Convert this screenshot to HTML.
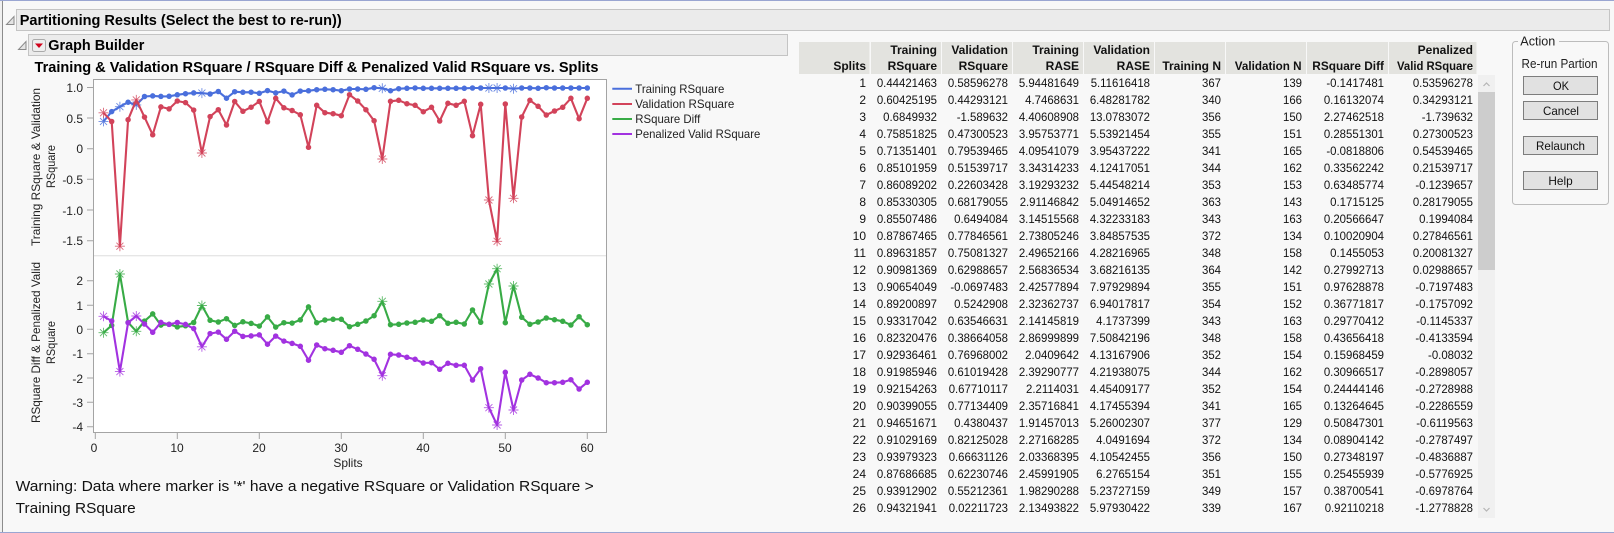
<!DOCTYPE html>
<html><head><meta charset="utf-8"><title>Partitioning Results</title>
<style>
html,body{margin:0;padding:0;background:#f7f7f7}
svg{display:block;font-family:"Liberation Sans",sans-serif}
.b{font-weight:bold;fill:#000}
.h{font-weight:bold;font-size:12px;fill:#111;text-anchor:end}
.c{font-size:12px;fill:#111;text-anchor:end}
.t{font-size:12px;fill:#222;text-anchor:end}
.m{font-size:12px;fill:#222;text-anchor:middle}
.l{font-size:12px;fill:#222}
.bt{font-size:12px;fill:#111;text-anchor:middle}
.ln{fill:none;stroke-width:2.1;stroke-linejoin:round}
.dt{fill:none;stroke-width:5.5;stroke-linecap:round}
.st{fill:none;stroke-width:.9;opacity:.8}
</style></head><body>
<svg width="1614" height="533" viewBox="0 0 1614 533" xmlns="http://www.w3.org/2000/svg">
<rect width="1614" height="533" fill="#f8f8f8"/>
<rect x="0" y="0" width="1614" height="1" fill="#9aa6d2"/>
<rect x="0" y="532" width="1614" height="1" fill="#9aa6d2"/>
<rect x="2" y="1" width="1" height="531" fill="#8c8c8c"/>
<rect x="0" y="1" width="2" height="531" fill="#f0f0f0"/>

<!-- outline headers -->
<rect x="16.5" y="9.5" width="1593" height="21" fill="#ebebeb" stroke="#c4c4c4"/>
<path d="M14 16.5V24.5H6.5Z" fill="#e4e4e4" stroke="#8a8a8a"/>
<text x="19.7" y="25" class="b" font-size="15" textLength="322" lengthAdjust="spacingAndGlyphs">Partitioning Results (Select the best to re-run))</text>
<rect x="28.5" y="34.5" width="759" height="21" fill="#ebebeb" stroke="#c4c4c4"/>
<path d="M26 41.5V49.5H18.5Z" fill="#e4e4e4" stroke="#8a8a8a"/>
<rect x="32.5" y="39.5" width="13" height="12" rx="2" fill="#eeeeee" stroke="#aaaaaa"/>
<path d="M35 43.5H43L39 48Z" fill="#d0021b"/>
<text x="48.3" y="50" class="b" font-size="15" textLength="96" lengthAdjust="spacingAndGlyphs">Graph Builder</text>
<text x="34.5" y="72" class="b" font-size="15" textLength="564" lengthAdjust="spacingAndGlyphs">Training &amp; Validation RSquare / RSquare Diff &amp; Penalized Valid RSquare vs. Splits</text>

<!-- plot frame -->
<rect x="93.5" y="79.5" width="513" height="353" fill="#ffffff"/>
<path d="M94 255.7H606" stroke="#dddddd" stroke-width="1"/>
<rect x="93.5" y="79.5" width="513" height="353" fill="none" stroke="#a4a4a4"/>
<path d="M87 87.5h6M87 118h6M87 148.7h6M87 179.3h6M87 210h6M87 240.7h6M87 280.7h6M87 305.3h6M87 329.3h6M87 353.7h6M87 378h6M87 402.3h6M87 426.7h6M95.3 433v6M177.3 433v6M259.3 433v6M341.3 433v6M423.3 433v6M505.3 433v6M587.3 433v6" stroke="#a4a4a4" stroke-width="1" fill="none"/>
<g class="t">
<text class="t" x="83" y="92">1.0</text><text class="t" x="83" y="123">0.5</text><text class="t" x="83" y="153">0</text><text class="t" x="83" y="184">-0.5</text><text class="t" x="83" y="215">-1.0</text><text class="t" x="83" y="245">-1.5</text>
<text class="t" x="83" y="285">2</text><text class="t" x="83" y="310">1</text><text class="t" x="83" y="334">0</text><text class="t" x="83" y="358">-1</text><text class="t" x="83" y="383">-2</text><text class="t" x="83" y="407">-3</text><text class="t" x="83" y="431">-4</text>
</g>
<text class="m" x="94" y="452">0</text><text class="m" x="177" y="452">10</text><text class="m" x="259" y="452">20</text><text class="m" x="341" y="452">30</text><text class="m" x="423" y="452">40</text><text class="m" x="505" y="452">50</text><text class="m" x="587" y="452">60</text>
<text class="m" x="348" y="467" font-size="12">Splits</text>
<text class="l" transform="translate(40 246) rotate(-90)" textLength="158" lengthAdjust="spacingAndGlyphs">Training RSquare &amp; Validation</text>
<text class="l" transform="translate(55 188) rotate(-90)" textLength="43" lengthAdjust="spacingAndGlyphs">RSquare</text>
<text class="l" transform="translate(40 423) rotate(-90)" textLength="161" lengthAdjust="spacingAndGlyphs">RSquare Diff &amp; Penalized Valid</text>
<text class="l" transform="translate(55 364) rotate(-90)" textLength="43" lengthAdjust="spacingAndGlyphs">RSquare</text>

<!-- series: training -->
<g stroke="#4a6fdc">
<polyline class="ln" points="103.5,121.4 111.7,111.6 119.9,106.7 128.1,102.2 136.3,104.9 144.5,96.5 152.7,95.9 160.9,96.4 169.1,96.3 177.3,94.8 185.5,93.7 193.7,92.9 201.9,93.1 210.1,94 218.3,91.5 226.5,98.2 234.7,91.7 242.9,92.3 251.1,92.2 259.3,93.3 267.5,90.6 275.7,92.9 283.9,91.1 292.1,94.9 300.3,91.1 308.5,90.8 316.7,89.7 324.9,89.3 333.1,89.7 341.3,90.7 349.5,89 357.7,89 365.9,89.3 374.1,87.7 382.3,88.3 390.5,90.7 398.7,88.7 406.9,88.3 415.1,88 423.3,88.3 431.5,88.3 439.7,88.3 447.9,88.3 456.1,88.3 464.3,88.3 472.5,88 480.7,88 488.9,88 497.1,88 505.3,88 513.5,88.7 521.7,88 529.9,88 538.1,88.3 546.3,87.7 554.5,88 562.7,88 570.9,88 579.1,88 587.3,88"/>
<path class="dt" d="M111.7 111.6h0M128.1 102.2h0M144.5 96.5h0M152.7 95.9h0M160.9 96.4h0M169.1 96.3h0M177.3 94.8h0M185.5 93.7h0M193.7 92.9h0M210.1 94h0M218.3 91.5h0M226.5 98.2h0M234.7 91.7h0M242.9 92.3h0M251.1 92.2h0M259.3 93.3h0M267.5 90.6h0M275.7 92.9h0M283.9 91.1h0M292.1 94.9h0M300.3 91.1h0M308.5 90.8h0M316.7 89.7h0M324.9 89.3h0M333.1 89.7h0M341.3 90.7h0M349.5 89h0M357.7 89h0M365.9 89.3h0M374.1 87.7h0M390.5 90.7h0M398.7 88.7h0M406.9 88.3h0M415.1 88h0M423.3 88.3h0M431.5 88.3h0M439.7 88.3h0M447.9 88.3h0M456.1 88.3h0M464.3 88.3h0M472.5 88h0M480.7 88h0M505.3 88h0M521.7 88h0M529.9 88h0M538.1 88.3h0M546.3 87.7h0M554.5 88h0M562.7 88h0M570.9 88h0M579.1 88h0M587.3 88h0"/>
<path class="st" d="M103.5 121.4m0-5v10m-5-5h10m-8.5-3.5l7 7m0-7l-7 7M119.9 106.7m0-5v10m-5-5h10m-8.5-3.5l7 7m0-7l-7 7M136.3 104.9m0-5v10m-5-5h10m-8.5-3.5l7 7m0-7l-7 7M201.9 93.1m0-5v10m-5-5h10m-8.5-3.5l7 7m0-7l-7 7M382.3 88.3m0-5v10m-5-5h10m-8.5-3.5l7 7m0-7l-7 7M488.9 88m0-5v10m-5-5h10m-8.5-3.5l7 7m0-7l-7 7M497.1 88m0-5v10m-5-5h10m-8.5-3.5l7 7m0-7l-7 7M513.5 88.7m0-5v10m-5-5h10m-8.5-3.5l7 7m0-7l-7 7"/>
</g>
<!-- series: validation -->
<g stroke="#d2435a">
<polyline class="ln" points="103.5,112.8 111.7,121.5 119.9,246.2 128.1,119.7 136.3,99.9 144.5,117.1 152.7,134.8 160.9,106.9 169.1,108.9 177.3,101 185.5,102.6 193.7,110.1 201.9,153 210.1,116.6 218.3,109.7 226.5,125 234.7,101.5 242.9,111.3 251.1,107.2 259.3,101.4 267.5,121.8 275.7,98.3 283.9,107.8 292.1,110.5 300.3,114.8 308.5,147.3 316.7,105.3 324.9,112.7 333.1,113.7 341.3,115.7 349.5,94.7 357.7,101 365.9,109.7 374.1,120.7 382.3,159 390.5,101.3 398.7,100.3 406.9,103.7 415.1,105.3 423.3,111.7 431.5,107.3 439.7,121 447.9,103.3 456.1,105.3 464.3,101.3 472.5,135.7 480.7,104.3 488.9,200 497.1,241.3 505.3,104 513.5,198.3 521.7,117 529.9,100.3 538.1,106.3 546.3,115 554.5,111 562.7,107.3 570.9,98.3 579.1,118.7 587.3,98.3"/>
<path class="dt" d="M111.7 121.5h0M128.1 119.7h0M144.5 117.1h0M152.7 134.8h0M160.9 106.9h0M169.1 108.9h0M177.3 101h0M185.5 102.6h0M193.7 110.1h0M210.1 116.6h0M218.3 109.7h0M226.5 125h0M234.7 101.5h0M242.9 111.3h0M251.1 107.2h0M259.3 101.4h0M267.5 121.8h0M275.7 98.3h0M283.9 107.8h0M292.1 110.5h0M300.3 114.8h0M308.5 147.3h0M316.7 105.3h0M324.9 112.7h0M333.1 113.7h0M341.3 115.7h0M349.5 94.7h0M357.7 101h0M365.9 109.7h0M374.1 120.7h0M390.5 101.3h0M398.7 100.3h0M406.9 103.7h0M415.1 105.3h0M423.3 111.7h0M431.5 107.3h0M439.7 121h0M447.9 103.3h0M456.1 105.3h0M464.3 101.3h0M472.5 135.7h0M480.7 104.3h0M505.3 104h0M521.7 117h0M529.9 100.3h0M538.1 106.3h0M546.3 115h0M554.5 111h0M562.7 107.3h0M570.9 98.3h0M579.1 118.7h0M587.3 98.3h0"/>
<path class="st" d="M103.5 112.8m0-5v10m-5-5h10m-8.5-3.5l7 7m0-7l-7 7M119.9 246.2m0-5v10m-5-5h10m-8.5-3.5l7 7m0-7l-7 7M136.3 99.9m0-5v10m-5-5h10m-8.5-3.5l7 7m0-7l-7 7M201.9 153m0-5v10m-5-5h10m-8.5-3.5l7 7m0-7l-7 7M382.3 159m0-5v10m-5-5h10m-8.5-3.5l7 7m0-7l-7 7M488.9 200m0-5v10m-5-5h10m-8.5-3.5l7 7m0-7l-7 7M497.1 241.3m0-5v10m-5-5h10m-8.5-3.5l7 7m0-7l-7 7M513.5 198.3m0-5v10m-5-5h10m-8.5-3.5l7 7m0-7l-7 7"/>
</g>
<!-- series: diff -->
<g stroke="#38ab46">
<polyline class="ln" points="103.5,332.7 111.7,325.4 119.9,274 128.1,322.4 136.3,331.3 144.5,321.1 152.7,313.9 160.9,325.1 169.1,324.3 177.3,326.9 185.5,325.8 193.7,322.5 201.9,305.5 210.1,320.3 218.3,322 226.5,318.7 234.7,325.4 242.9,321.8 251.1,323.4 259.3,326.1 267.5,316.9 275.7,327.1 283.9,322.7 292.1,323.1 300.3,319.9 308.5,306.9 316.7,322.7 324.9,320 333.1,319.3 341.3,319.3 349.5,326.7 357.7,324.3 365.9,321 374.1,315.7 382.3,301.3 390.5,324.7 398.7,324.3 406.9,323 415.1,322.3 423.3,320 431.5,321.3 439.7,315.7 447.9,323.3 456.1,322.3 464.3,324 472.5,310 480.7,322.3 488.9,284 497.1,268.7 505.3,322.7 513.5,286 521.7,317.3 529.9,324.3 538.1,322 546.3,318 554.5,319.7 562.7,321.3 570.9,325 579.1,316.7 587.3,324.7"/>
<path class="dt" d="M111.7 325.4h0M128.1 322.4h0M144.5 321.1h0M152.7 313.9h0M160.9 325.1h0M169.1 324.3h0M177.3 326.9h0M185.5 325.8h0M193.7 322.5h0M210.1 320.3h0M218.3 322h0M226.5 318.7h0M234.7 325.4h0M242.9 321.8h0M251.1 323.4h0M259.3 326.1h0M267.5 316.9h0M275.7 327.1h0M283.9 322.7h0M292.1 323.1h0M300.3 319.9h0M308.5 306.9h0M316.7 322.7h0M324.9 320h0M333.1 319.3h0M341.3 319.3h0M349.5 326.7h0M357.7 324.3h0M365.9 321h0M374.1 315.7h0M390.5 324.7h0M398.7 324.3h0M406.9 323h0M415.1 322.3h0M423.3 320h0M431.5 321.3h0M439.7 315.7h0M447.9 323.3h0M456.1 322.3h0M464.3 324h0M472.5 310h0M480.7 322.3h0M505.3 322.7h0M521.7 317.3h0M529.9 324.3h0M538.1 322h0M546.3 318h0M554.5 319.7h0M562.7 321.3h0M570.9 325h0M579.1 316.7h0M587.3 324.7h0"/>
<path class="st" d="M103.5 332.7m0-5v10m-5-5h10m-8.5-3.5l7 7m0-7l-7 7M119.9 274m0-5v10m-5-5h10m-8.5-3.5l7 7m0-7l-7 7M136.3 331.3m0-5v10m-5-5h10m-8.5-3.5l7 7m0-7l-7 7M201.9 305.5m0-5v10m-5-5h10m-8.5-3.5l7 7m0-7l-7 7M382.3 301.3m0-5v10m-5-5h10m-8.5-3.5l7 7m0-7l-7 7M488.9 284m0-5v10m-5-5h10m-8.5-3.5l7 7m0-7l-7 7M497.1 268.7m0-5v10m-5-5h10m-8.5-3.5l7 7m0-7l-7 7M513.5 286m0-5v10m-5-5h10m-8.5-3.5l7 7m0-7l-7 7"/>
</g>
<!-- series: penalized -->
<g stroke="#a232e0">
<polyline class="ln" points="103.5,316.3 111.7,321 119.9,371.6 128.1,322.7 136.3,316 144.5,324 152.7,332.3 160.9,322.4 169.1,324.4 177.3,322.5 185.5,324.4 193.7,328.6 201.9,346.8 210.1,333.6 218.3,332.1 226.5,339.3 234.7,331.2 242.9,336.4 251.1,335.9 259.3,334.9 267.5,344.2 275.7,336.1 283.9,341.1 292.1,343.4 300.3,346.3 308.5,360.2 316.7,345 324.9,348.7 333.1,350.3 341.3,352.3 349.5,345.7 357.7,349.3 365.9,354 374.1,359.3 382.3,375.7 390.5,354.3 398.7,355 406.9,357.3 415.1,359.3 423.3,363 431.5,362.7 439.7,369.3 447.9,363.3 456.1,365.3 464.3,365.3 472.5,380 480.7,368.7 488.9,407.7 497.1,425 505.3,372.3 513.5,410 521.7,380 529.9,374.3 538.1,378 546.3,382.7 554.5,382.7 562.7,382.3 570.9,379.7 579.1,389 587.3,382.3"/>
<path class="dt" d="M111.7 321h0M128.1 322.7h0M144.5 324h0M152.7 332.3h0M160.9 322.4h0M169.1 324.4h0M177.3 322.5h0M185.5 324.4h0M193.7 328.6h0M210.1 333.6h0M218.3 332.1h0M226.5 339.3h0M234.7 331.2h0M242.9 336.4h0M251.1 335.9h0M259.3 334.9h0M267.5 344.2h0M275.7 336.1h0M283.9 341.1h0M292.1 343.4h0M300.3 346.3h0M308.5 360.2h0M316.7 345h0M324.9 348.7h0M333.1 350.3h0M341.3 352.3h0M349.5 345.7h0M357.7 349.3h0M365.9 354h0M374.1 359.3h0M390.5 354.3h0M398.7 355h0M406.9 357.3h0M415.1 359.3h0M423.3 363h0M431.5 362.7h0M439.7 369.3h0M447.9 363.3h0M456.1 365.3h0M464.3 365.3h0M472.5 380h0M480.7 368.7h0M505.3 372.3h0M521.7 380h0M529.9 374.3h0M538.1 378h0M546.3 382.7h0M554.5 382.7h0M562.7 382.3h0M570.9 379.7h0M579.1 389h0M587.3 382.3h0"/>
<path class="st" d="M103.5 316.3m0-5v10m-5-5h10m-8.5-3.5l7 7m0-7l-7 7M119.9 371.6m0-5v10m-5-5h10m-8.5-3.5l7 7m0-7l-7 7M136.3 316m0-5v10m-5-5h10m-8.5-3.5l7 7m0-7l-7 7M201.9 346.8m0-5v10m-5-5h10m-8.5-3.5l7 7m0-7l-7 7M382.3 375.7m0-5v10m-5-5h10m-8.5-3.5l7 7m0-7l-7 7M488.9 407.7m0-5v10m-5-5h10m-8.5-3.5l7 7m0-7l-7 7M497.1 425m0-5v10m-5-5h10m-8.5-3.5l7 7m0-7l-7 7M513.5 410m0-5v10m-5-5h10m-8.5-3.5l7 7m0-7l-7 7"/>
</g>

<!-- legend -->
<path d="M612.3 88.7H632" stroke="#4a6fdc" stroke-width="2"/>
<path d="M612.3 104H632" stroke="#d2435a" stroke-width="2"/>
<path d="M612.3 119H632" stroke="#38ab46" stroke-width="2"/>
<path d="M612.3 134H632" stroke="#a232e0" stroke-width="2"/>
<text class="l" x="635.3" y="93" textLength="89" lengthAdjust="spacingAndGlyphs">Training RSquare</text>
<text class="l" x="635.3" y="108" textLength="99" lengthAdjust="spacingAndGlyphs">Validation RSquare</text>
<text class="l" x="635.3" y="123" textLength="65" lengthAdjust="spacingAndGlyphs">RSquare Diff</text>
<text class="l" x="635.3" y="138" textLength="125" lengthAdjust="spacingAndGlyphs">Penalized Valid RSquare</text>

<!-- warning -->
<text x="15.7" y="491" font-size="15" fill="#111" textLength="578" lengthAdjust="spacingAndGlyphs">Warning: Data where marker is '*' have a negative RSquare or Validation RSquare &gt;</text>
<text x="15.7" y="513" font-size="15" fill="#111" textLength="120" lengthAdjust="spacingAndGlyphs">Training RSquare</text>

<!-- table header -->
<g fill="#e3e3df">
<rect x="799" y="42" width="70.5" height="32"/><rect x="871" y="42" width="70" height="32"/><rect x="942" y="42" width="70" height="32"/><rect x="1013" y="42" width="70" height="32"/><rect x="1084" y="42" width="70" height="32"/><rect x="1155" y="42" width="70" height="32"/><rect x="1226" y="42" width="80" height="32"/><rect x="1307" y="42" width="81" height="32"/><rect x="1389" y="42" width="87.5" height="32"/>
</g>
<text class="h" x="866" y="70">Splits</text>
<text class="h" x="937" y="54">Training</text><text class="h" x="937" y="70">RSquare</text>
<text class="h" x="1008" y="54">Validation</text><text class="h" x="1008" y="70">RSquare</text>
<text class="h" x="1079" y="54">Training</text><text class="h" x="1079" y="70">RASE</text>
<text class="h" x="1150" y="54">Validation</text><text class="h" x="1150" y="70">RASE</text>
<text class="h" x="1221" y="70">Training N</text>
<text class="h" x="1301.5" y="70" textLength="66.7" lengthAdjust="spacingAndGlyphs">Validation N</text>
<text class="h" x="1384" y="70" textLength="71.7" lengthAdjust="spacingAndGlyphs">RSquare Diff</text>
<text class="h" x="1473" y="54">Penalized</text><text class="h" x="1473" y="70" textLength="76" lengthAdjust="spacingAndGlyphs">Valid RSquare</text>

<!-- table body -->
<g transform="translate(866 -1)"><text class="c"><tspan x="0" y="88">1</tspan><tspan x="0" y="105">2</tspan><tspan x="0" y="122">3</tspan><tspan x="0" y="139">4</tspan><tspan x="0" y="156">5</tspan><tspan x="0" y="173">6</tspan><tspan x="0" y="190">7</tspan><tspan x="0" y="207">8</tspan><tspan x="0" y="224">9</tspan><tspan x="0" y="241">10</tspan><tspan x="0" y="258">11</tspan><tspan x="0" y="275">12</tspan><tspan x="0" y="292">13</tspan><tspan x="0" y="309">14</tspan><tspan x="0" y="326">15</tspan><tspan x="0" y="343">16</tspan><tspan x="0" y="360">17</tspan><tspan x="0" y="377">18</tspan><tspan x="0" y="394">19</tspan><tspan x="0" y="411">20</tspan><tspan x="0" y="428">21</tspan><tspan x="0" y="445">22</tspan><tspan x="0" y="462">23</tspan><tspan x="0" y="479">24</tspan><tspan x="0" y="496">25</tspan><tspan x="0" y="513">26</tspan></text></g>
<g transform="translate(937 -1) scale(.95 1)"><text class="c"><tspan x="0" y="88">0.44421463</tspan><tspan x="0" y="105">0.60425195</tspan><tspan x="0" y="122">0.6849932</tspan><tspan x="0" y="139">0.75851825</tspan><tspan x="0" y="156">0.71351401</tspan><tspan x="0" y="173">0.85101959</tspan><tspan x="0" y="190">0.86089202</tspan><tspan x="0" y="207">0.85330305</tspan><tspan x="0" y="224">0.85507486</tspan><tspan x="0" y="241">0.87867465</tspan><tspan x="0" y="258">0.89631857</tspan><tspan x="0" y="275">0.90981369</tspan><tspan x="0" y="292">0.90654049</tspan><tspan x="0" y="309">0.89200897</tspan><tspan x="0" y="326">0.93317042</tspan><tspan x="0" y="343">0.82320476</tspan><tspan x="0" y="360">0.92936461</tspan><tspan x="0" y="377">0.91985946</tspan><tspan x="0" y="394">0.92154263</tspan><tspan x="0" y="411">0.90399055</tspan><tspan x="0" y="428">0.94651671</tspan><tspan x="0" y="445">0.91029169</tspan><tspan x="0" y="462">0.93979323</tspan><tspan x="0" y="479">0.87686685</tspan><tspan x="0" y="496">0.93912902</tspan><tspan x="0" y="513">0.94321941</tspan></text></g>
<g transform="translate(1008 -1) scale(.95 1)"><text class="c"><tspan x="0" y="88">0.58596278</tspan><tspan x="0" y="105">0.44293121</tspan><tspan x="0" y="122">-1.589632</tspan><tspan x="0" y="139">0.47300523</tspan><tspan x="0" y="156">0.79539465</tspan><tspan x="0" y="173">0.51539717</tspan><tspan x="0" y="190">0.22603428</tspan><tspan x="0" y="207">0.68179055</tspan><tspan x="0" y="224">0.6494084</tspan><tspan x="0" y="241">0.77846561</tspan><tspan x="0" y="258">0.75081327</tspan><tspan x="0" y="275">0.62988657</tspan><tspan x="0" y="292">-0.0697483</tspan><tspan x="0" y="309">0.5242908</tspan><tspan x="0" y="326">0.63546631</tspan><tspan x="0" y="343">0.38664058</tspan><tspan x="0" y="360">0.76968002</tspan><tspan x="0" y="377">0.61019428</tspan><tspan x="0" y="394">0.67710117</tspan><tspan x="0" y="411">0.77134409</tspan><tspan x="0" y="428">0.4380437</tspan><tspan x="0" y="445">0.82125028</tspan><tspan x="0" y="462">0.66631126</tspan><tspan x="0" y="479">0.62230746</tspan><tspan x="0" y="496">0.55212361</tspan><tspan x="0" y="513">0.02211723</tspan></text></g>
<g transform="translate(1079 -1) scale(.95 1)"><text class="c"><tspan x="0" y="88">5.94481649</tspan><tspan x="0" y="105">4.7468631</tspan><tspan x="0" y="122">4.40608908</tspan><tspan x="0" y="139">3.95753771</tspan><tspan x="0" y="156">4.09541079</tspan><tspan x="0" y="173">3.34314233</tspan><tspan x="0" y="190">3.19293232</tspan><tspan x="0" y="207">2.91146842</tspan><tspan x="0" y="224">3.14515568</tspan><tspan x="0" y="241">2.73805246</tspan><tspan x="0" y="258">2.49652166</tspan><tspan x="0" y="275">2.56836534</tspan><tspan x="0" y="292">2.42577894</tspan><tspan x="0" y="309">2.32362737</tspan><tspan x="0" y="326">2.14145819</tspan><tspan x="0" y="343">2.86999899</tspan><tspan x="0" y="360">2.0409642</tspan><tspan x="0" y="377">2.39290777</tspan><tspan x="0" y="394">2.2114031</tspan><tspan x="0" y="411">2.35716841</tspan><tspan x="0" y="428">1.91457013</tspan><tspan x="0" y="445">2.27168285</tspan><tspan x="0" y="462">2.03368395</tspan><tspan x="0" y="479">2.45991905</tspan><tspan x="0" y="496">1.98290288</tspan><tspan x="0" y="513">2.13493822</tspan></text></g>
<g transform="translate(1150 -1) scale(.95 1)"><text class="c"><tspan x="0" y="88">5.11616418</tspan><tspan x="0" y="105">6.48281782</tspan><tspan x="0" y="122">13.0783072</tspan><tspan x="0" y="139">5.53921454</tspan><tspan x="0" y="156">3.95437222</tspan><tspan x="0" y="173">4.12417051</tspan><tspan x="0" y="190">5.44548214</tspan><tspan x="0" y="207">5.04914652</tspan><tspan x="0" y="224">4.32233183</tspan><tspan x="0" y="241">3.84857535</tspan><tspan x="0" y="258">4.28216965</tspan><tspan x="0" y="275">3.68216135</tspan><tspan x="0" y="292">7.97929894</tspan><tspan x="0" y="309">6.94017817</tspan><tspan x="0" y="326">4.1737399</tspan><tspan x="0" y="343">7.50842196</tspan><tspan x="0" y="360">4.13167906</tspan><tspan x="0" y="377">4.21938075</tspan><tspan x="0" y="394">4.45409177</tspan><tspan x="0" y="411">4.17455394</tspan><tspan x="0" y="428">5.26002307</tspan><tspan x="0" y="445">4.0491694</tspan><tspan x="0" y="462">4.10542455</tspan><tspan x="0" y="479">6.2765154</tspan><tspan x="0" y="496">5.23727159</tspan><tspan x="0" y="513">5.97930422</tspan></text></g>
<g transform="translate(1221 -1) scale(.95 1)"><text class="c"><tspan x="0" y="88">367</tspan><tspan x="0" y="105">340</tspan><tspan x="0" y="122">356</tspan><tspan x="0" y="139">355</tspan><tspan x="0" y="156">341</tspan><tspan x="0" y="173">344</tspan><tspan x="0" y="190">353</tspan><tspan x="0" y="207">363</tspan><tspan x="0" y="224">343</tspan><tspan x="0" y="241">372</tspan><tspan x="0" y="258">348</tspan><tspan x="0" y="275">364</tspan><tspan x="0" y="292">355</tspan><tspan x="0" y="309">354</tspan><tspan x="0" y="326">343</tspan><tspan x="0" y="343">348</tspan><tspan x="0" y="360">352</tspan><tspan x="0" y="377">344</tspan><tspan x="0" y="394">352</tspan><tspan x="0" y="411">341</tspan><tspan x="0" y="428">377</tspan><tspan x="0" y="445">372</tspan><tspan x="0" y="462">356</tspan><tspan x="0" y="479">351</tspan><tspan x="0" y="496">349</tspan><tspan x="0" y="513">339</tspan></text></g>
<g transform="translate(1302 -1) scale(.95 1)"><text class="c"><tspan x="0" y="88">139</tspan><tspan x="0" y="105">166</tspan><tspan x="0" y="122">150</tspan><tspan x="0" y="139">151</tspan><tspan x="0" y="156">165</tspan><tspan x="0" y="173">162</tspan><tspan x="0" y="190">153</tspan><tspan x="0" y="207">143</tspan><tspan x="0" y="224">163</tspan><tspan x="0" y="241">134</tspan><tspan x="0" y="258">158</tspan><tspan x="0" y="275">142</tspan><tspan x="0" y="292">151</tspan><tspan x="0" y="309">152</tspan><tspan x="0" y="326">163</tspan><tspan x="0" y="343">158</tspan><tspan x="0" y="360">154</tspan><tspan x="0" y="377">162</tspan><tspan x="0" y="394">154</tspan><tspan x="0" y="411">165</tspan><tspan x="0" y="428">129</tspan><tspan x="0" y="445">134</tspan><tspan x="0" y="462">150</tspan><tspan x="0" y="479">155</tspan><tspan x="0" y="496">157</tspan><tspan x="0" y="513">167</tspan></text></g>
<g transform="translate(1384 -1) scale(.95 1)"><text class="c"><tspan x="0" y="88">-0.1417481</tspan><tspan x="0" y="105">0.16132074</tspan><tspan x="0" y="122">2.27462518</tspan><tspan x="0" y="139">0.28551301</tspan><tspan x="0" y="156">-0.0818806</tspan><tspan x="0" y="173">0.33562242</tspan><tspan x="0" y="190">0.63485774</tspan><tspan x="0" y="207">0.1715125</tspan><tspan x="0" y="224">0.20566647</tspan><tspan x="0" y="241">0.10020904</tspan><tspan x="0" y="258">0.1455053</tspan><tspan x="0" y="275">0.27992713</tspan><tspan x="0" y="292">0.97628878</tspan><tspan x="0" y="309">0.36771817</tspan><tspan x="0" y="326">0.29770412</tspan><tspan x="0" y="343">0.43656418</tspan><tspan x="0" y="360">0.15968459</tspan><tspan x="0" y="377">0.30966517</tspan><tspan x="0" y="394">0.24444146</tspan><tspan x="0" y="411">0.13264645</tspan><tspan x="0" y="428">0.50847301</tspan><tspan x="0" y="445">0.08904142</tspan><tspan x="0" y="462">0.27348197</tspan><tspan x="0" y="479">0.25455939</tspan><tspan x="0" y="496">0.38700541</tspan><tspan x="0" y="513">0.92110218</tspan></text></g>
<g transform="translate(1473 -1) scale(.95 1)"><text class="c"><tspan x="0" y="88">0.53596278</tspan><tspan x="0" y="105">0.34293121</tspan><tspan x="0" y="122">-1.739632</tspan><tspan x="0" y="139">0.27300523</tspan><tspan x="0" y="156">0.54539465</tspan><tspan x="0" y="173">0.21539717</tspan><tspan x="0" y="190">-0.1239657</tspan><tspan x="0" y="207">0.28179055</tspan><tspan x="0" y="224">0.1994084</tspan><tspan x="0" y="241">0.27846561</tspan><tspan x="0" y="258">0.20081327</tspan><tspan x="0" y="275">0.02988657</tspan><tspan x="0" y="292">-0.7197483</tspan><tspan x="0" y="309">-0.1757092</tspan><tspan x="0" y="326">-0.1145337</tspan><tspan x="0" y="343">-0.4133594</tspan><tspan x="0" y="360">-0.08032</tspan><tspan x="0" y="377">-0.2898057</tspan><tspan x="0" y="394">-0.2728988</tspan><tspan x="0" y="411">-0.2286559</tspan><tspan x="0" y="428">-0.6119563</tspan><tspan x="0" y="445">-0.2787497</tspan><tspan x="0" y="462">-0.4836887</tspan><tspan x="0" y="479">-0.5776925</tspan><tspan x="0" y="496">-0.6978764</tspan><tspan x="0" y="513">-1.2778828</tspan></text></g>

<!-- scrollbar -->
<rect x="1478" y="75" width="17" height="443" fill="#f0f0f0"/>
<rect x="1478" y="92" width="17" height="178" fill="#cdcdcd"/>
<path d="M1483.5 86l3-3 3 3" fill="none" stroke="#b5b5b5" stroke-width="1.2"/>
<path d="M1483.5 508l3 3 3-3" fill="none" stroke="#b5b5b5" stroke-width="1.2"/>

<!-- action panel -->
<rect x="1512.5" y="41.5" width="96" height="163" rx="3" fill="none" stroke="#bcbcbc"/>
<rect x="1518" y="36" width="41" height="10" fill="#f8f8f8"/>
<text x="1520.3" y="45.5" font-size="12.5" fill="#222" textLength="35" lengthAdjust="spacingAndGlyphs">Action</text>
<text x="1521.5" y="68" font-size="12.5" fill="#222" textLength="76" lengthAdjust="spacingAndGlyphs">Re-run Partion</text>
<g fill="#e1e1e1" stroke="#7d7d7d">
<rect x="1523.5" y="76.5" width="74" height="18"/>
<rect x="1523.5" y="101.5" width="74" height="18"/>
<rect x="1523.5" y="136.5" width="74" height="18"/>
<rect x="1523.5" y="171.5" width="74" height="18"/>
</g>
<text class="bt" x="1561" y="90" textLength="16" lengthAdjust="spacingAndGlyphs">OK</text>
<text class="bt" x="1561" y="115" textLength="36" lengthAdjust="spacingAndGlyphs">Cancel</text>
<text class="bt" x="1560.5" y="150" textLength="49" lengthAdjust="spacingAndGlyphs">Relaunch</text>
<text class="bt" x="1560.5" y="185" textLength="24.3" lengthAdjust="spacingAndGlyphs">Help</text>
</svg>
</body></html>
